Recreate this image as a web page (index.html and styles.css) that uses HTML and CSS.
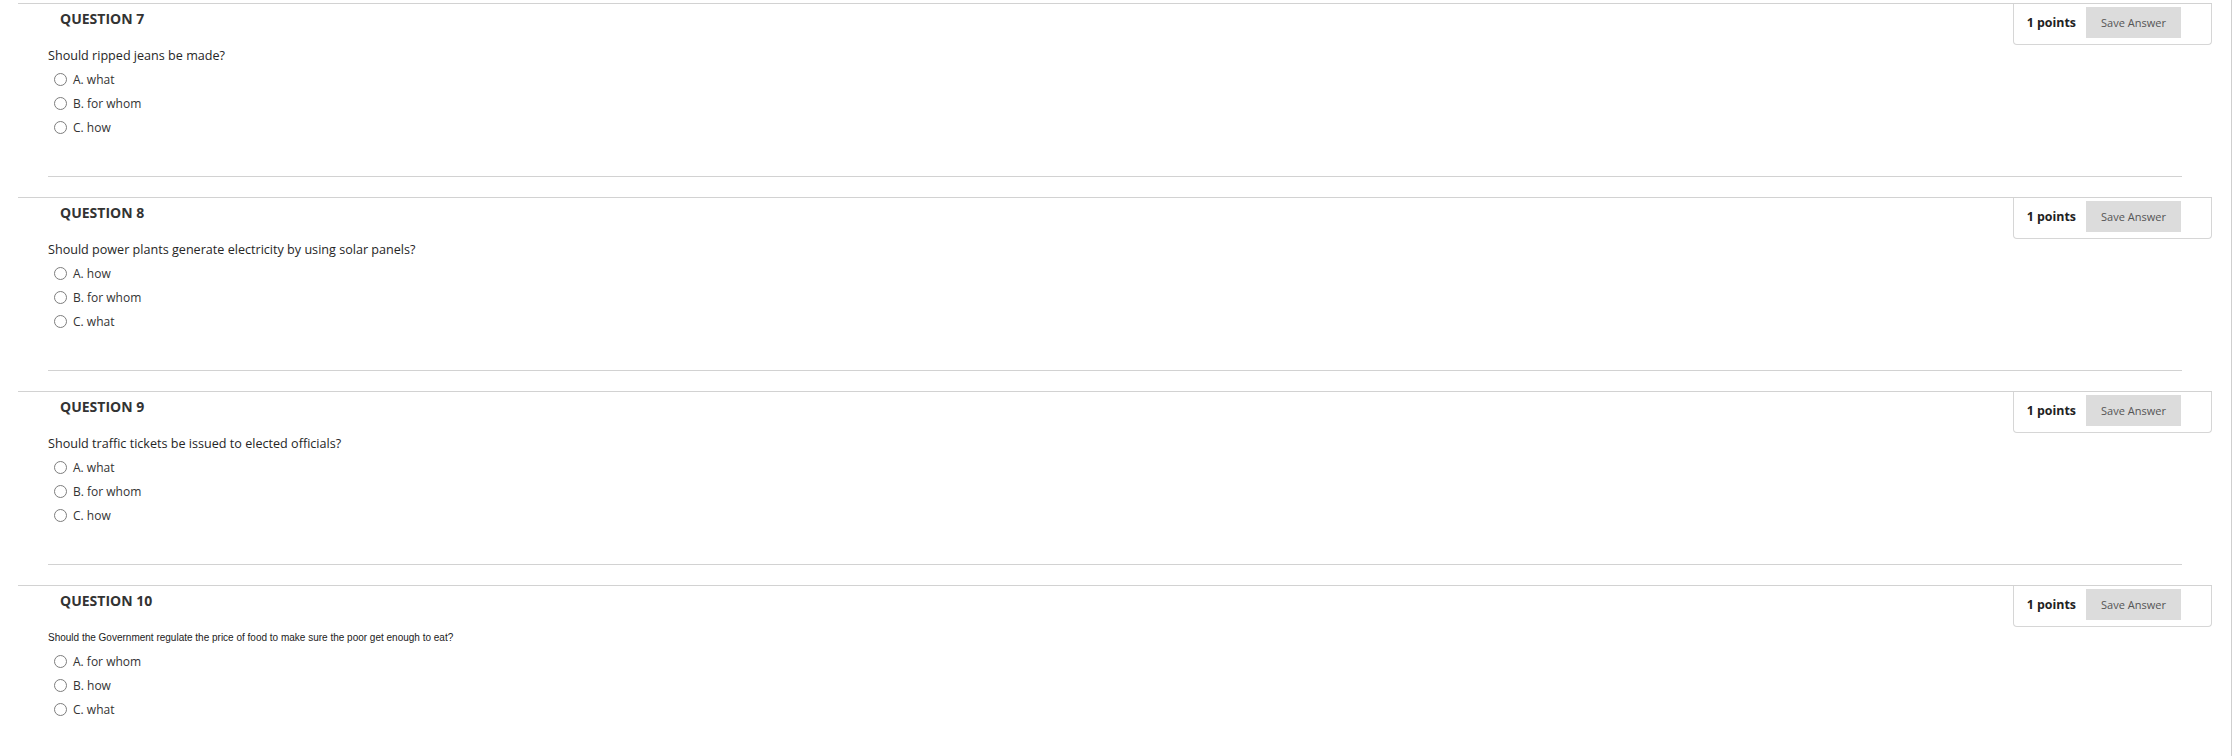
FILE: index.html
```html
<!DOCTYPE html>
<html lang="en">
<head>
    <meta charset="UTF-8">
    <title>Take Test</title>
    <link rel="stylesheet" href="styles.css">
</head>
<body>
    <div class="page">
        <ol class="questions">
            <!-- Question 7 -->
            <li class="question">
                <div class="q-head">
                    <h3 class="q-title">QUESTION 7</h3>
                    <div class="q-points">
                        <span class="points">1 points</span>
                        <button class="save-btn">Save Answer</button>
                    </div>
                </div>
                <div class="q-body">
                    <p class="q-text">Should ripped jeans be made?</p>
                    <ul class="choices">
                        <li><span class="radio"></span><label>A. what</label></li>
                        <li><span class="radio"></span><label>B. for whom</label></li>
                        <li><span class="radio"></span><label>C. how</label></li>
                    </ul>
                </div>
            </li>

            <!-- Question 8 -->
            <li class="question">
                <div class="q-head">
                    <h3 class="q-title">QUESTION 8</h3>
                    <div class="q-points">
                        <span class="points">1 points</span>
                        <button class="save-btn">Save Answer</button>
                    </div>
                </div>
                <div class="q-body">
                    <p class="q-text">Should power plants generate electricity by using solar panels?</p>
                    <ul class="choices">
                        <li><span class="radio"></span><label>A. how</label></li>
                        <li><span class="radio"></span><label>B. for whom</label></li>
                        <li><span class="radio"></span><label>C. what</label></li>
                    </ul>
                </div>
            </li>

            <!-- Question 9 -->
            <li class="question">
                <div class="q-head">
                    <h3 class="q-title">QUESTION 9</h3>
                    <div class="q-points">
                        <span class="points">1 points</span>
                        <button class="save-btn">Save Answer</button>
                    </div>
                </div>
                <div class="q-body">
                    <p class="q-text">Should traffic tickets be issued to elected officials?</p>
                    <ul class="choices">
                        <li><span class="radio"></span><label>A. what</label></li>
                        <li><span class="radio"></span><label>B. for whom</label></li>
                        <li><span class="radio"></span><label>C. how</label></li>
                    </ul>
                </div>
            </li>

            <!-- Question 10 -->
            <li class="question">
                <div class="q-head">
                    <h3 class="q-title">QUESTION 10</h3>
                    <div class="q-points">
                        <span class="points">1 points</span>
                        <button class="save-btn">Save Answer</button>
                    </div>
                </div>
                <div class="q-body">
                    <p class="q-text q-text-small">Should the Government regulate the price of food to make sure the poor get enough to eat?</p>
                    <ul class="choices">
                        <li><span class="radio"></span><label>A. for whom</label></li>
                        <li><span class="radio"></span><label>B. how</label></li>
                        <li><span class="radio"></span><label>C. what</label></li>
                    </ul>
                </div>
            </li>
        </ol>
    </div>
</body>
</html>
```

FILE: styles.css
```css
/* Base */
body {
    margin: 0;
    background-color: #fff;
    font-family: "Open Sans", "Noto Sans", sans-serif;
    color: #262626;
}

.page {
    width: 2232px;
    height: 100vh;
    padding-top: 3px;
    box-sizing: border-box;
    border-right: 1px solid #cfcfcf;
    overflow: hidden;
}

/* Question list */
.questions {
    list-style: none;
    margin: 0;
    padding: 0 19px 0 18px;
}

.question {
    border-top: 1px solid #d2d2d2;
}

.q-head {
    display: flex;
    justify-content: space-between;
    align-items: flex-start;
}

.q-title {
    margin: 5px 0 0 42px;
    font-size: 14px;
    line-height: 19px;
    font-weight: 700;
    color: #333;
}

/* Points + save box */
.q-points {
    display: flex;
    align-items: center;
    gap: 10px;
    padding: 3px 30px 6px 13px;
    border: 1px solid #d6d6d6;
    border-top: none;
    border-radius: 0 0 4px 4px;
}

.points {
    font-size: 12.4px;
    font-weight: 700;
    color: #222;
}

.save-btn {
    width: 95px;
    height: 31px;
    padding: 0;
    border: none;
    background-color: #dcdcdc;
    font-family: "Open Sans", "Noto Sans", sans-serif;
    font-size: 11px;
    color: #555;
    cursor: pointer;
}

/* Question body */
.q-body {
    margin: 1px 30px 20px;
    padding-bottom: 37px;
    border-bottom: 1px solid #d2d2d2;
}

.q-text {
    margin: 0 0 3px;
    padding-top: 1px;
    font-size: 12.6px;
    line-height: 17px;
}

.q-text-small {
    font-family: "Liberation Sans", Arial, sans-serif;
    font-size: 10px;
    color: #222;
}

.choices {
    list-style: none;
    margin: 0;
    padding: 0;
}

.choices li {
    display: flex;
    align-items: center;
    height: 24px;
    font-size: 12px;
    color: #333;
}

.radio {
    width: 11px;
    height: 11px;
    margin: 0 6px 0 6px;
    border: 1px solid #7d7d7d;
    border-radius: 50%;
    background-color: #fff;
}
```
